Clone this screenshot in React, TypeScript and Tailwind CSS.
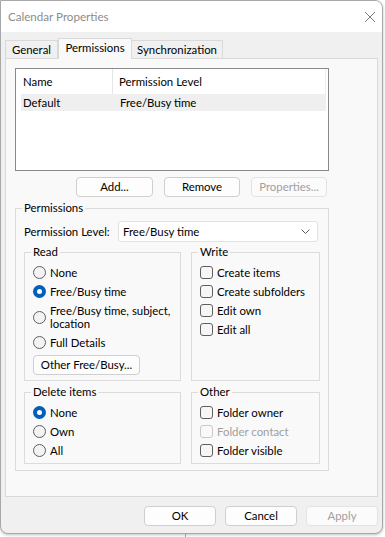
import { ReactNode } from "react";

const Radio = ({ checked, children, className = "" }: { checked?: boolean; children: ReactNode; className?: string }) => (
  <div className={`flex items-center gap-[4px] ${className}`}>
    {checked ? (
      <span className="flex h-[13px] w-[13px] shrink-0 items-center justify-center rounded-full bg-[#005fb8]">
        <span className="h-[5px] w-[5px] rounded-full bg-white" />
      </span>
    ) : (
      <span className="h-[13px] w-[13px] shrink-0 rounded-full border border-[#5f5f5f] bg-[#f3f3f3]" />
    )}
    <span>{children}</span>
  </div>
);

const Check = ({ disabled, children }: { disabled?: boolean; children: ReactNode }) => (
  <div className={`flex h-[19px] items-center gap-[4px] ${disabled ? "text-[#a0a0a0]" : ""}`}>
    <span
      className={`h-[13px] w-[13px] shrink-0 rounded-[3px] border ${
        disabled ? "border-[#c8c8c8] bg-[#f9f9f9]" : "border-[#5f5f5f] bg-[#f6f6f6]"
      }`}
    />
    <span>{children}</span>
  </div>
);

const Btn = ({ disabled, children, className = "" }: { disabled?: boolean; children: ReactNode; className?: string }) => (
  <div
    className={`flex h-[20px] items-center justify-center rounded-[4px] border ${
      disabled ? "border-[#e3e3e3] bg-[#fbfbfb] text-[#a0a0a0]" : "border-[#cfcfcf] bg-[#fdfdfd]"
    } ${className}`}
  >
    {children}
  </div>
);

const Group = ({ title, className = "", children }: { title: string; className?: string; children: ReactNode }) => (
  <fieldset className={`min-w-0 border border-[#dcdcdc] px-[8px] ${className}`}>
    <legend className="-ml-[2px] px-[2px] leading-[16px]">{title}</legend>
    {children}
  </fieldset>
);

export default function App() {
  return (
    <div
      className="relative h-[537px] w-[385px] overflow-hidden whitespace-nowrap bg-white text-[11.4px] leading-[16px] text-black"
      style={{ fontFamily: 'Lato, "Noto Sans", sans-serif' }}
    >
      <div className="flex h-[534px] w-[383px] flex-col overflow-hidden rounded-tr-[8px] rounded-b-[8px] border border-[#a8a8a8] bg-[#f0f0f0] shadow-[0_1px_3px_rgba(0,0,0,0.25)]">
        {/* title bar */}
        <div className="flex h-[31px] shrink-0 items-center justify-between bg-white pl-[7px] pr-[5px]">
          <span className="text-[11.6px] text-[#8c8c8c]">Calendar Properties</span>
          <svg width="12" height="12" viewBox="0 0 12 12" className="mr-[1px]">
            <path d="M1 1L11 11M11 1L1 11" stroke="#7a7a7a" strokeWidth="1" fill="none" />
          </svg>
        </div>

        <div className="flex flex-1 flex-col px-[4px] pt-[6px]">
          {/* tabs */}
          <div className="relative z-10 flex h-[20px] items-end">
            <div className="flex h-[18px] w-[53px] items-center justify-center border border-b-0 border-[#d9d9d9] bg-[#f0f0f0]">
              General
            </div>
            <div className="-mb-px flex h-[21px] w-[74px] items-start justify-center border border-b-0 border-[#d9d9d9] bg-[#f9f9f9] pt-[1px]">
              Permissions
            </div>
            <div className="flex h-[18px] w-[91px] items-center justify-center border border-b-0 border-l-0 border-[#d9d9d9] bg-[#f0f0f0]">
              Synchronization
            </div>
          </div>

          {/* panel */}
          <div className="h-[439px] w-[373px] border border-[#d9d9d9] bg-[#f9f9f9] px-[9px] pt-[9px]">
            {/* list view */}
            <div className="h-[103px] w-[314px] border border-[#8a8a8a] bg-white">
              <div className="flex h-[25px] items-center">
                <div className="flex h-full w-[97px] items-center border-r border-[#e5e5e5] pl-[7px]">Name</div>
                <div className="flex h-full w-[213px] items-center border-r border-[#eeeeee] pl-[6px]">Permission Level</div>
              </div>
              <div className="ml-[5px] flex h-[17px] w-[305px] items-center bg-[#efefef]">
                <div className="w-[92px] pl-[2px]">Default</div>
                <div className="pl-[7px]">Free/Busy time</div>
              </div>
            </div>

            {/* list buttons */}
            <div className="mt-[6px] flex w-[314px] justify-end gap-[11px] pr-[2px]">
              <Btn className="w-[77px]">Add...</Btn>
              <Btn className="w-[76px]">Remove</Btn>
              <Btn className="w-[76px]" disabled>
                Properties...
              </Btn>
            </div>

            {/* permissions group */}
            <Group title="Permissions" className="mt-[3px] w-[314px] pb-[6px]">
              <div className="mt-[5px] flex items-center">
                <span className="w-[94px]">Permission Level:</span>
                <div className="flex h-[21px] w-[200px] items-center justify-between rounded-[3px] border border-[#e2e2e2] bg-white pl-[4px] pr-[7px]">
                  <span>Free/Busy time</span>
                  <svg width="9" height="5" viewBox="0 0 9 5">
                    <path d="M0.5 0.5L4.5 4.5L8.5 0.5" stroke="#5a5a5a" strokeWidth="1" fill="none" />
                  </svg>
                </div>
              </div>

              <div className="mt-[2px] flex gap-[10px]">
                <Group title="Read" className="w-[157px] pb-[5px]">
                  <div className="pt-[3px]">
                    <Radio className="h-[19px]">None</Radio>
                    <Radio className="h-[19px]" checked>
                      Free/Busy time
                    </Radio>
                    <Radio className="py-[3px] leading-[13px]">
                      Free/Busy time, subject,
                      <br />
                      location
                    </Radio>
                    <Radio className="h-[19px]">Full Details</Radio>
                    <Btn className="mt-[3px] w-[107px]">Other Free/Busy...</Btn>
                  </div>
                </Group>
                <Group title="Write" className="w-[129px]">
                  <div className="pt-[3px]">
                    <Check>Create items</Check>
                    <Check>Create subfolders</Check>
                    <Check>Edit own</Check>
                    <Check>Edit all</Check>
                  </div>
                </Group>
              </div>

              <div className="mt-[3px] flex gap-[10px]">
                <Group title="Delete items" className="w-[157px] pb-[3px]">
                  <div className="pt-[3px]">
                    <Radio className="h-[19px]" checked>
                      None
                    </Radio>
                    <Radio className="h-[19px]">Own</Radio>
                    <Radio className="h-[19px]">All</Radio>
                  </div>
                </Group>
                <Group title="Other" className="w-[129px] pb-[3px]">
                  <div className="pt-[3px]">
                    <Check>Folder owner</Check>
                    <Check disabled>Folder contact</Check>
                    <Check>Folder visible</Check>
                  </div>
                </Group>
              </div>
            </Group>
          </div>

          {/* dialog buttons */}
          <div className="mt-[9px] flex justify-end gap-[9px]">
            <Btn className="w-[72px]">OK</Btn>
            <Btn className="w-[72px]">Cancel</Btn>
            <Btn className="w-[72px]" disabled>
              Apply
            </Btn>
          </div>
        </div>
      </div>
      <div className="absolute bottom-0 left-[185px] h-[3px] w-px bg-[#9a9a9a]" />
    </div>
  );
}
